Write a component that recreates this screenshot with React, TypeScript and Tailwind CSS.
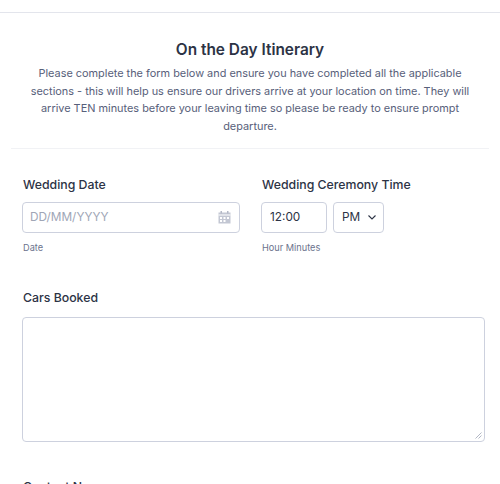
export default function App() {
  return (
    <div className="h-[484px] w-[500px] overflow-hidden bg-white font-['Inter',sans-serif]">
      <div className="h-[13px] border-b border-[#e3e5ec]" />
      <header className="mx-[11px] border-b border-[#f1f2f5] pt-[27px] pb-[13px] text-center">
        <h1 className="text-[15.4px] leading-[20px] font-semibold text-[#2c3345]">On the Day Itinerary</h1>
        <p className="mt-[5px] px-[14px] text-[10.9px] leading-[17.5px] text-[#57607a]">
          Please complete the form below and ensure you have completed all the applicable sections - this will help us ensure our drivers arrive at your location on time. They will arrive TEN minutes before your leaving time so please be ready to ensure prompt departure.
        </p>
      </header>
      <div className="flex px-[22px] pt-[27px]">
        <div className="w-[217.5px]">
          <div className="pl-[1px] text-[12.3px] leading-[18px] font-medium text-[#2c3345]">Wedding Date</div>
          <div className="mt-[8px] flex h-[31px] items-center justify-between rounded-[4px] border border-[#cdd1de] pr-[7.5px] pl-[7px]">
            <span className="text-[11.8px] text-[#a0a6b6]">DD/MM/YYYY</span>
            <svg width="13" height="13" viewBox="0 0 13 13">
              <rect x="0.5" y="1.5" width="12" height="11" fill="#c3c7d3" />
              <rect x="2.5" y="0" width="1.5" height="2.5" fill="#b3b8c6" />
              <rect x="9" y="0" width="1.5" height="2.5" fill="#b3b8c6" />
              <rect x="0.5" y="3.5" width="12" height="1" fill="#fff" />
              <rect x="2" y="6" width="2" height="2" fill="#fff" />
              <rect x="5.5" y="6" width="2" height="2" fill="#fff" />
              <rect x="9" y="6" width="2" height="2" fill="#fff" />
              <rect x="2" y="9" width="2" height="2" fill="#fff" />
              <rect x="5.5" y="9" width="2" height="2" fill="#fff" />
            </svg>
          </div>
          <div className="mt-[8px] pl-[1px] text-[9.2px] leading-[14px] text-[#6c738d]">Date</div>
        </div>
        <div className="ml-[21.5px]">
          <div className="pl-[1px] text-[12.3px] leading-[18px] font-medium text-[#2c3345]">Wedding Ceremony Time</div>
          <div className="mt-[8px] flex gap-[6px]">
            <div className="flex h-[31px] w-[66px] items-center rounded-[4px] border border-[#cdd1de] px-[8px] text-[11.8px] text-[#2c3345]">12:00</div>
            <div className="flex h-[31px] w-[51px] items-center justify-between rounded-[4px] border border-[#cdd1de] pr-[7px] pl-[8px] text-[11.8px] text-[#2c3345]">
              PM
              <svg width="8" height="5" viewBox="0 0 8 5" fill="none" stroke="#2c3345" strokeWidth="1.1">
                <path d="M0.5 0.5l3.5 3.5 3.5-3.5" />
              </svg>
            </div>
          </div>
          <div className="mt-[8px] pl-[1px] text-[9.2px] leading-[14px] text-[#6c738d]">Hour Minutes</div>
        </div>
      </div>
      <div className="px-[22px] pt-[34px]">
        <div className="pl-[1px] text-[12.3px] leading-[18px] font-medium text-[#2c3345]">Cars Booked</div>
        <div className="relative mt-[10px] h-[125px] w-[463px] rounded-[4px] border border-[#cdd1de]">
          <svg width="7" height="7" viewBox="0 0 7 7" stroke="#a0a6b6" strokeWidth="0.8" className="absolute right-[2px] bottom-[2px]">
            <path d="M0.5 6.5L6.5 0.5M3.5 6.5L6.5 3.5" />
          </svg>
        </div>
        <div className="mt-[36px] pl-[1px] text-[12.3px] leading-[18px] font-medium text-[#2c3345]">Contact Name</div>
      </div>
    </div>
  );
}
